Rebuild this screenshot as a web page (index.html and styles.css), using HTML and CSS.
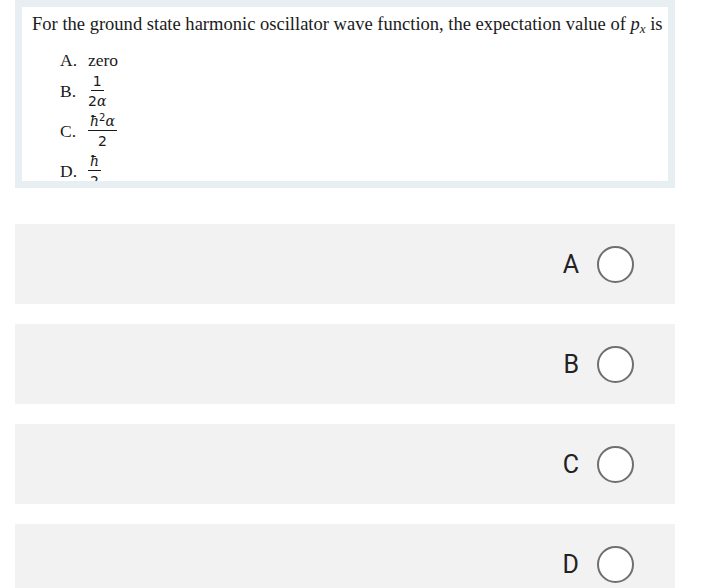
FILE: index.html
```html
<!DOCTYPE html>
<html>
<head>
<meta charset="utf-8">
<link rel="stylesheet" href="styles.css">
</head>
<body>
<div class="page">
  <div class="qbox">
    <div class="qinner">
      <p class="qtext">For the ground state harmonic oscillator wave function, the expectation value of <span class="math">p<sub>x</sub></span> is</p>
      <ol class="opts">
        <li class="opt"><span class="lbl">A.</span><span class="plain">zero</span></li>
        <li class="opt"><span class="lbl">B.</span><span class="frac"><span class="num">1</span><span class="den">2<i>α</i></span></span></li>
        <li class="opt"><span class="lbl">C.</span><span class="frac"><span class="num"><i>ħ</i><sup>2</sup><i>α</i></span><span class="den">2</span></span></li>
        <li class="opt"><span class="lbl">D.</span><span class="frac"><span class="num"><i>ħ</i></span><span class="den">2</span></span></li>
      </ol>
    </div>
  </div>
  <div class="choices">
    <div class="choice"><span class="letter">A</span><span class="radio"></span></div>
    <div class="choice"><span class="letter">B</span><span class="radio"></span></div>
    <div class="choice"><span class="letter">C</span><span class="radio"></span></div>
    <div class="choice"><span class="letter">D</span><span class="radio"></span></div>
  </div>
</div>
</body>
</html>
```

FILE: styles.css
```css
html, body {
  margin: 0;
  padding: 0;
  background: #ffffff;
}
.page {
  padding-left: 15px;
  width: 660px;
}
.qbox {
  box-sizing: border-box;
  height: 188px;
  border: 7px solid #e8eff2;
  background: #ffffff;
  overflow: hidden;
}
.qinner {
  padding: 6px 0 0 10px;
  font-family: "Liberation Serif", "Times New Roman", serif;
  color: #1a1a1a;
}
.qtext {
  margin: 0;
  font-size: 18.55px;
  line-height: 22px;
  white-space: nowrap;
}
.math {
  font-style: italic;
}
.math sub {
  font-size: 13px;
  vertical-align: -3px;
  line-height: 0;
}
.opts {
  list-style: none;
  margin: 15px 0 0 0;
  padding: 0 0 0 28px;
  font-size: 17.5px;
}
.opt {
  display: flex;
  align-items: center;
  height: 40px;
}
.opt:first-child {
  height: 21px;
}
.lbl {
  width: 28px;
}
.frac {
  display: inline-flex;
  flex-direction: column;
  align-items: center;
  font-family: "DejaVu Sans", sans-serif;
  font-size: 14px;
  line-height: 14px;
}
.frac i {
  font-family: "DejaVu Serif", serif;
  font-style: italic;
}
.frac sup {
  font-size: 10px;
  vertical-align: 5px;
  line-height: 0;
}
.num {
  padding: 0 2px 2px;
  border-bottom: 1px solid #1a1a1a;
}
.den {
  padding-top: 3px;
}
.choices {
  margin-top: 36px;
  display: flex;
  flex-direction: column;
  gap: 20px;
}
.choice {
  height: 80px;
  background: #f2f2f2;
  display: flex;
  align-items: center;
  justify-content: flex-end;
  padding-right: 41px;
  gap: 18px;
}
.letter {
  font-family: Roboto, "Noto Sans", sans-serif;
  font-size: 25px;
  color: #222222;
}
.radio {
  box-sizing: border-box;
  width: 37px;
  height: 37px;
  border: 2px solid #6f6f6f;
  border-radius: 50%;
  background: #ffffff;
}
```
